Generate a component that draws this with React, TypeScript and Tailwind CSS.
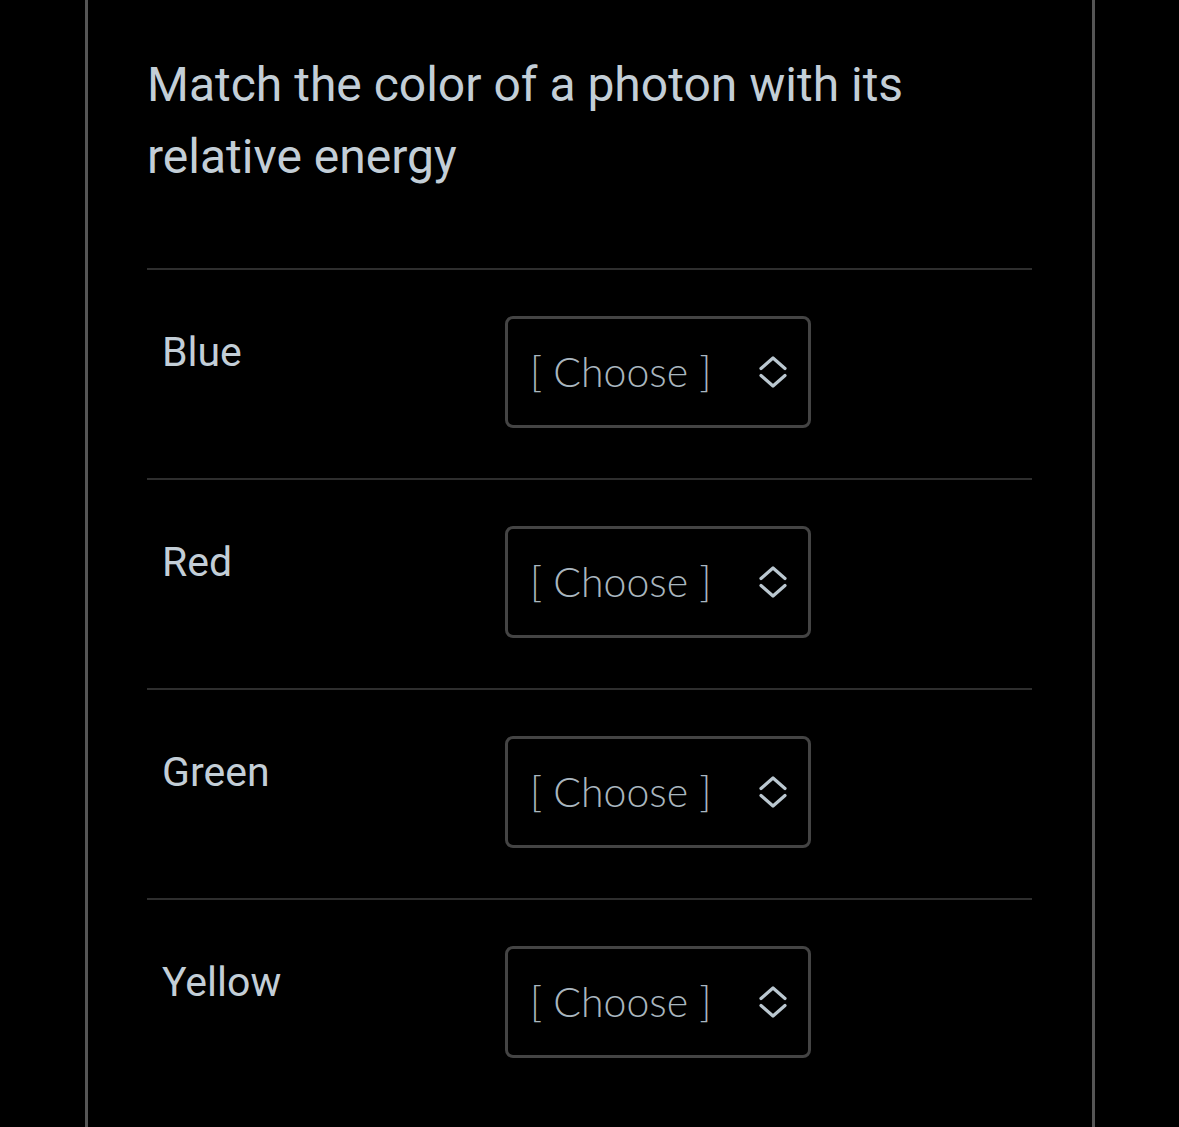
const items = ["Blue", "Red", "Green", "Yellow"];

function UpDown() {
  return (
    <svg width="30" height="32" viewBox="0 0 30 32" fill="none" className="shrink-0">
      <path d="M3 12.5 L15 2 L27 12.5" stroke="#bac7d0" strokeWidth="3.2" strokeLinecap="round" strokeLinejoin="round" />
      <path d="M3 19.5 L15 30 L27 19.5" stroke="#bac7d0" strokeWidth="3.2" strokeLinecap="round" strokeLinejoin="round" />
    </svg>
  );
}

function ChooseSelect() {
  return (
    <div className="flex h-[112px] w-[306px] items-center justify-between rounded-[8px] border-[3px] border-[#444444] pl-[22px] pr-[20px]">
      <span className="text-[41px] font-light text-[#a9b6bf]" style={{ fontFamily: "Lato, 'Liberation Sans', sans-serif" }}>
        [ Choose ]
      </span>
      <UpDown />
    </div>
  );
}

export default function App() {
  return (
    <div className="min-h-screen bg-black">
      <div className="ml-[85px] h-[1127px] w-[1010px] overflow-hidden border-x-[3px] border-[#555555] pl-[59px] pr-[60px] pt-[49px]" style={{ fontFamily: "Roboto, 'Liberation Sans', sans-serif" }}>
        <h1 className="w-[820px] text-[48px] leading-[72px] text-[#c3ced7]">
          Match the color of a photon with its relative energy
        </h1>
        <div className="mt-[75px] w-[885px]">
          {items.map((name) => (
            <div key={name} className="flex items-start border-t-2 border-[#2e2e2e] pb-[50px] pt-[46px]">
              <div className="mt-[12px] w-[358px] pl-[15px] text-[41px] leading-[48px] text-[#c3ced7]">{name}</div>
              <ChooseSelect />
            </div>
          ))}
        </div>
      </div>
    </div>
  );
}
